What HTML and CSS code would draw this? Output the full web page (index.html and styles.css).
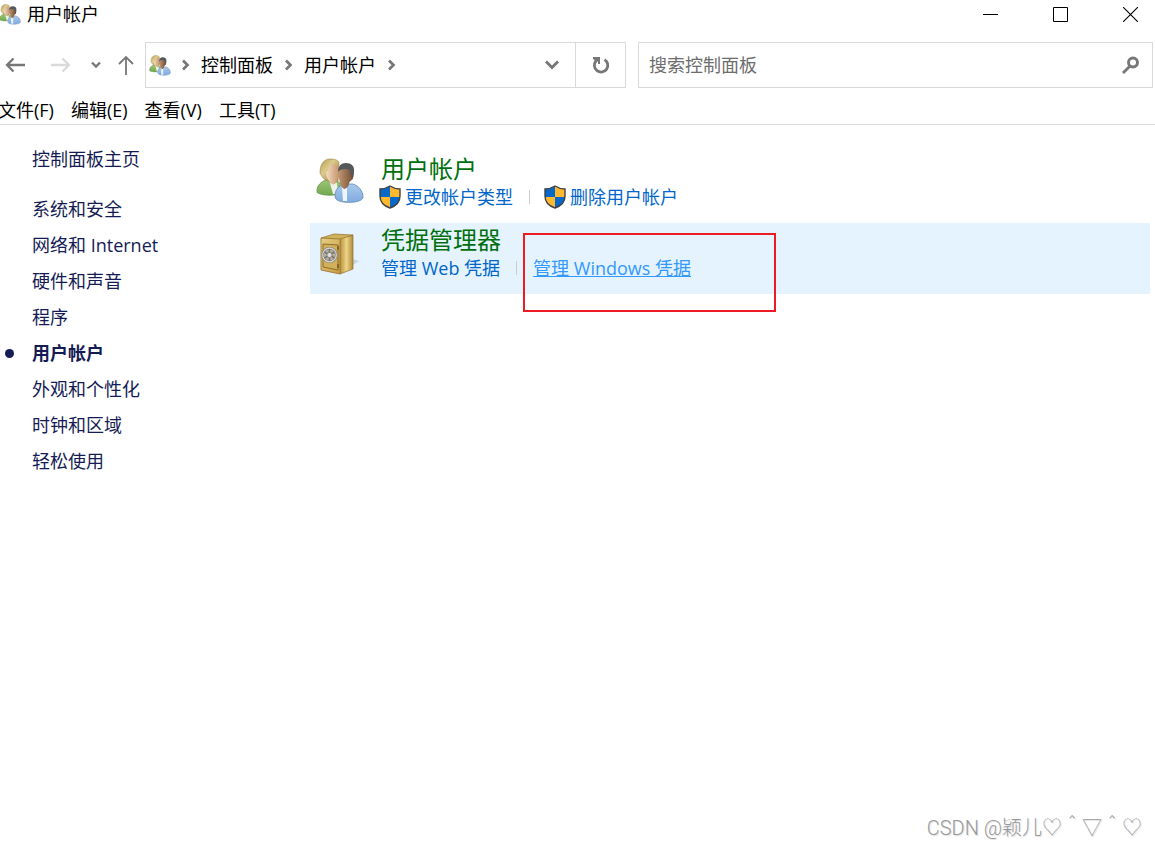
FILE: index.html
```html
<!DOCTYPE html>
<html lang="zh-CN">
<head>
<meta charset="utf-8">
<meta name="viewport" content="width=device-width, initial-scale=1">
<title>用户帐户</title>
<link rel="stylesheet" href="styles.css">
</head>
<body>
<svg class="defs" aria-hidden="true">
  <defs>
    <linearGradient id="hair" x1="0" y1="0" x2="1" y2="1"><stop offset="0" stop-color="#b39a4d"/><stop offset="0.4" stop-color="#dccb8c"/><stop offset="1" stop-color="#94793a"/></linearGradient>
    <linearGradient id="faceA" x1="0" y1="0" x2="1" y2="0"><stop offset="0" stop-color="#f6dcc0"/><stop offset="1" stop-color="#c4946d"/></linearGradient>
    <linearGradient id="faceB" x1="0" y1="0" x2="1" y2="0"><stop offset="0" stop-color="#c39a75"/><stop offset="1" stop-color="#714c33"/></linearGradient>
    <linearGradient id="green" x1="0" y1="0" x2="0" y2="1"><stop offset="0" stop-color="#9dc578"/><stop offset="1" stop-color="#72a94c"/></linearGradient>
    <linearGradient id="blue" x1="0" y1="0" x2="0" y2="1"><stop offset="0" stop-color="#a9c9ec"/><stop offset="1" stop-color="#7fabdf"/></linearGradient>
    <linearGradient id="goldFront" x1="0" y1="0" x2="1" y2="1"><stop offset="0" stop-color="#e6cf82"/><stop offset="1" stop-color="#c39c43"/></linearGradient>
    <linearGradient id="goldSide" x1="0" y1="0" x2="1" y2="0"><stop offset="0" stop-color="#b8923f"/><stop offset="0.5" stop-color="#ecd487"/><stop offset="1" stop-color="#b18a38"/></linearGradient>
    <symbol id="users" viewBox="0 0 48 46">
      <path d="M1 33c0-6 4-9 9-11h9c4 1 6 4 6 8v5c-6 3-17 3-23 0-1 0-1-1-1-2z" fill="url(#green)" stroke="#67904f" stroke-width=".8"/>
      <path d="M14 25l3 11h5l-1-11z" fill="#eef2ea"/>
      <path d="M4 15C4 6 8 1 14 1c5 0 8 1 9 4l-1 18H12c-4-1-6-4-8-8z" fill="url(#hair)" stroke="#9c8346" stroke-width=".6"/>
      <path d="M10 14c2-1 3-4 4-7 4-2 9 0 9 5s-1 10-4 14c-2 1-4 0-5-2-3-3-4-6-4-10z" fill="url(#faceA)"/>
      <path d="M19 38c0-7 4-10 9-12h9c6 2 10 7 10 13 0 6-19 7-26 3-1-1-2-2-2-4z" fill="url(#blue)" stroke="#6389b4" stroke-width=".8"/>
      <path d="M26 29l1 14h4v-13z" fill="#edf4fb"/>
      <path d="M22 14c0-6 3-9 8-9s9 3 8 9c0 4-1 6-2 8H24c-1-2-2-4-2-8z" fill="#55585b"/>
      <path d="M22.500 13c3-2 8-3 11-1 1 2 1 4 2 5 2 0 2 2 1 4l-3 3c-1 4-2 6-5 7-3-1-5-5-5-9-2-4-2-7-1-9z" fill="url(#faceB)"/>
    </symbol>
    <symbol id="safe" viewBox="0 0 42 42">
      <path d="M20 41l19-13-6-2z" fill="#8e9db0" opacity=".35"/>
      <path d="M1 5l13-4 19 1-13 5z" fill="#cfb25c" stroke="#92702a" stroke-width=".7"/>
      <path d="M20 6l13-4v34l-13 5z" fill="url(#goldSide)" stroke="#93702b" stroke-width=".7"/>
      <path d="M1 5l19 1v35L1 37z" fill="url(#goldFront)" stroke="#a5813a"/>
      <path d="M3 11l15 1v25L3 34z" fill="#d2b05a" stroke="#8f6d2b"/>
      <circle cx="9.500" cy="22" r="8" fill="#c9a750"/>
      <circle cx="9.500" cy="22" r="6.800" fill="#b8b19c" stroke="#85847f" stroke-width="2.600"/>
      <circle cx="9.500" cy="22" r="6.800" fill="none" stroke="#d5d5d5" stroke-width="1.200"/>
      <path d="M9.500 16v12M4.500 19l10 6M14.500 19l-10 6" stroke="#77756f" stroke-width="1.600"/>
      <circle cx="9.500" cy="22" r="2.600" fill="#dededb" stroke="#77756e" stroke-width=".8"/>
      <path d="M18 13v4M18 31v4" stroke="#775b21" stroke-width="1.500"/>
    </symbol>
    <symbol id="shield" viewBox="0 0 22 24">
      <path d="M11 1c3 2 6 3 10 3v7c0 6-4 10-10 12C5 21 1 17 1 11V4c4 0 7-1 10-3z" fill="#ffb92e"/>
      <path d="M11 1v11H1V4c4 0 7-1 10-3zM11 12h10c0 5-4 9-10 11z" fill="#0768ca"/>
      <path d="M11 1c3 2 6 3 10 3v7c0 6-4 10-10 12C5 21 1 17 1 11V4c4 0 7-1 10-3z" fill="none" stroke="#414244" stroke-width="1.400"/>
    </symbol>
    <symbol id="next" viewBox="0 0 10 12"><path d="M2 1.500L6.500 6 2 10.500" fill="none" stroke="#777" stroke-width="2.700"/></symbol>
  </defs>
</svg>
<div class="window">
  <header class="titlebar">
    <svg class="icon-users" aria-hidden="true"><use href="#users"/></svg>
    <h1 class="title">用户帐户</h1>
    <div class="controls">
      <button class="control" aria-label="最小化"><svg width="15" height="15"><path d="M0 7.500h15" stroke="#000"/></svg></button>
      <button class="control" aria-label="最大化"><svg width="15" height="15"><path d="M.5.5h14v14H.5z" fill="none" stroke="#000"/></svg></button>
      <button class="control" aria-label="关闭"><svg width="15" height="15"><path d="M0 0l15 15M15 0L0 15" stroke="#000" stroke-width="1.100"/></svg></button>
    </div>
  </header>

  <div class="navbar">
    <div class="history">
      <button class="nav-button" aria-label="后退"><svg width="20" height="16"><path d="M20 8H2M8.500 1.500L2 8l6.500 6.500" fill="none" stroke="#777" stroke-width="2.300"/></svg></button>
      <button class="nav-button" aria-label="前进" disabled><svg width="20" height="16"><path d="M0 8h18M11.500 1.500L18 8l-6.500 6.500" fill="none" stroke="#dadada" stroke-width="2.300"/></svg></button>
      <button class="nav-button small" aria-label="最近位置"><svg width="10" height="8"><path d="M1 1.500l4 4 4-4" fill="none" stroke="#777" stroke-width="2.300"/></svg></button>
      <button class="nav-button up" aria-label="上移"><svg width="16" height="20"><path d="M8 20V2M1 9l7-7 7 7" fill="none" stroke="#777" stroke-width="1.800"/></svg></button>
    </div>
    <div class="address">
      <nav class="crumbs" aria-label="地址">
        <svg class="icon-users" aria-hidden="true"><use href="#users"/></svg>
        <svg class="next" aria-hidden="true"><use href="#next"/></svg>
        <a href="#">控制面板</a>
        <svg class="next" aria-hidden="true"><use href="#next"/></svg>
        <a href="#">用户帐户</a>
        <svg class="next" aria-hidden="true"><use href="#next"/></svg>
      </nav>
      <button class="drop" aria-label="以前的位置"><svg width="14" height="10"><path d="M1 1.500l6 6 6-6" fill="none" stroke="#777" stroke-width="2.900"/></svg></button>
      <button class="refresh" aria-label="刷新"><svg width="18" height="18" viewBox="0 0 18 18"><path d="M4 5A6.700 6.700 0 1 0 12.500 3.600" fill="none" stroke="#777" stroke-width="2.800"/><path d="M1 1h7v7H6V5.500L4 6 2 3.500 1 3z" fill="#777"/></svg></button>
    </div>
    <label class="search">
      <input type="search" placeholder="搜索控制面板" aria-label="搜索控制面板">
      <svg width="18" height="18" aria-hidden="true"><circle cx="11" cy="6.500" r="4.500" fill="none" stroke="#777" stroke-width="2.900"/><path d="M8 10l-7 7" stroke="#777" stroke-width="2.900"/></svg>
    </label>
  </div>

  <div class="menubar">
    <button>文件(F)</button>
    <button>编辑(E)</button>
    <button>查看(V)</button>
    <button>工具(T)</button>
  </div>

  <div class="body">
    <nav class="sidebar" aria-label="类别">
      <a class="home" href="#">控制面板主页</a>
      <a href="#">系统和安全</a>
      <a href="#">网络和 Internet</a>
      <a href="#">硬件和声音</a>
      <a href="#">程序</a>
      <a class="current" href="#" aria-current="page">用户帐户</a>
      <a href="#">外观和个性化</a>
      <a href="#">时钟和区域</a>
      <a href="#">轻松使用</a>
    </nav>
    <main class="content">
      <section class="category">
        <svg class="category-icon" aria-hidden="true"><use href="#users"/></svg>
        <div class="details">
          <h2><a href="#">用户帐户</a></h2>
          <div class="tasks">
            <a class="task shielded" href="#"><svg class="shield" aria-hidden="true"><use href="#shield"/></svg>更改帐户类型</a>
            <span class="separator"></span>
            <a class="task shielded" href="#"><svg class="shield" aria-hidden="true"><use href="#shield"/></svg>删除用户帐户</a>
          </div>
        </div>
      </section>
      <section class="category selected">
        <svg class="category-icon safe" aria-hidden="true"><use href="#safe"/></svg>
        <div class="details">
          <h2><a href="#">凭据管理器</a></h2>
          <div class="tasks">
            <a class="task" href="#">管理 Web 凭据</a>
            <span class="separator"></span>
            <a class="task hovered" href="#">管理 Windows 凭据</a>
          </div>
        </div>
        <div class="marker"></div>
      </section>
    </main>
  </div>
  <footer class="credit">CSDN @颖儿♡＾▽＾♡</footer>
</div>
</body>
</html>
```
FILE: styles.css
```css
* { box-sizing: border-box; }

body {
  margin: 0;
  background: #fff;
  color: #000;
  font: 18px/24px "Open Sans", "Noto Sans CJK SC", sans-serif;
  overflow-x: hidden;
}

a { color: inherit; text-decoration: none; }
svg { display: block; flex: none; }
h1, h2 { margin: 0; font-weight: 400; }

button {
  display: flex;
  align-items: center;
  justify-content: center;
  padding: 0;
  border: 0;
  background: none;
  color: inherit;
  font: inherit;
}

.defs { position: absolute; width: 0; height: 0; }

.window {
  display: flex;
  flex-direction: column;
  min-height: 100vh;
}

.icon-users { width: 24px; height: 21px; }

.titlebar {
  display: flex;
  align-items: center;
  height: 28px;
}

.titlebar .icon-users { margin-left: -2px; }
.title { margin-left: 5px; font-size: 18px; }

.controls {
  display: flex;
  gap: 20px;
  margin-left: auto;
}

.control { width: 50px; height: 28px; }

.navbar {
  display: flex;
  height: 46px;
  margin: 14px 2px 0 0;
}

.history {
  display: flex;
  align-items: center;
  width: 145px;
  padding-left: 5px;
}

.nav-button { width: 20px; height: 46px; margin-right: 26px; }
.nav-button.small { margin: 0 10px; }
.nav-button:nth-child(2) { margin-right: 5px; }
.nav-button.up { margin: 0; }

.address {
  display: flex;
  flex: 480;
  min-width: 0;
  margin-right: 12px;
  border: 1px solid #d9d9d9;
}

.crumbs {
  display: flex;
  flex: 1;
  align-items: center;
  padding-left: 2px;
  white-space: nowrap;
}

.next { width: 10px; height: 12px; margin: 0 10px; }
.icon-users + .next { margin-left: 9px; }
.next + a { margin-right: 1px; }
.drop { width: 46px; }
.refresh { width: 50px; border-left: 1px solid #d9d9d9; }

.search {
  display: flex;
  flex: 492;
  align-items: center;
  min-width: 0;
  padding: 0 12px 0 10px;
  border: 1px solid #d9d9d9;
}

.search input {
  flex: 1;
  min-width: 0;
  padding: 0;
  border: 0;
  outline: 0;
  background: none;
  font: inherit;
}

.search input::placeholder { color: #6d6d6d; opacity: 1; }

.menubar {
  display: flex;
  gap: 17px;
  height: 37px;
  padding-top: 9px;
  margin-left: -2px;
  border-bottom: 1px solid #d9d9d9;
}

.menubar button { height: 26px; }

.body { display: flex; flex: 1; }

.sidebar {
  display: flex;
  flex: none;
  flex-direction: column;
  gap: 12px;
  width: 310px;
  padding: 22px 0 0 32px;
  color: #151c55;
}

.sidebar .home { margin-bottom: 14px; }

.sidebar .current { position: relative; font-weight: 700; }

.sidebar .current::before {
  content: "";
  position: absolute;
  top: 8px;
  left: -27px;
  width: 9px;
  height: 9px;
  border-radius: 50%;
  background: #151c55;
}

.content { flex: 1; padding: 27px 5px 0 0; }

.category {
  position: relative;
  display: flex;
  height: 71px;
  padding-left: 6px;
}

.category-icon { width: 48px; height: 46px; margin-top: 6px; }
.category-icon.safe { width: 42px; height: 42px; margin: 10px 2px 0 4px; }
.selected { background: #e5f3ff; }
.details { padding: 2px 0 0 17px; }

.details h2 {
  color: #006f0d;
  font-size: 24px;
  line-height: 30px;
}

.tasks {
  display: flex;
  align-items: center;
  color: #0066cc;
  line-height: 26px;
  white-space: nowrap;
}

.task.shielded { display: flex; align-items: center; gap: 4px; margin-left: -2px; }
.shield { width: 22px; height: 24px; }
.separator { width: 1px; height: 14px; margin: 0 16px; background: #ccc; }
.task.hovered { color: #3399ff; text-decoration: underline; }

.marker {
  position: absolute;
  top: 10px;
  left: 213px;
  width: 253px;
  height: 79px;
  border: 2px solid #ed1c24;
  pointer-events: none;
}

.credit {
  padding: 0 13px 6px 0;
  color: #999;
  font: 300 20px/26px Roboto, "Noto Sans CJK SC", sans-serif;
  text-align: right;
  text-shadow: 1px 1px 1px #ddd;
}
```
